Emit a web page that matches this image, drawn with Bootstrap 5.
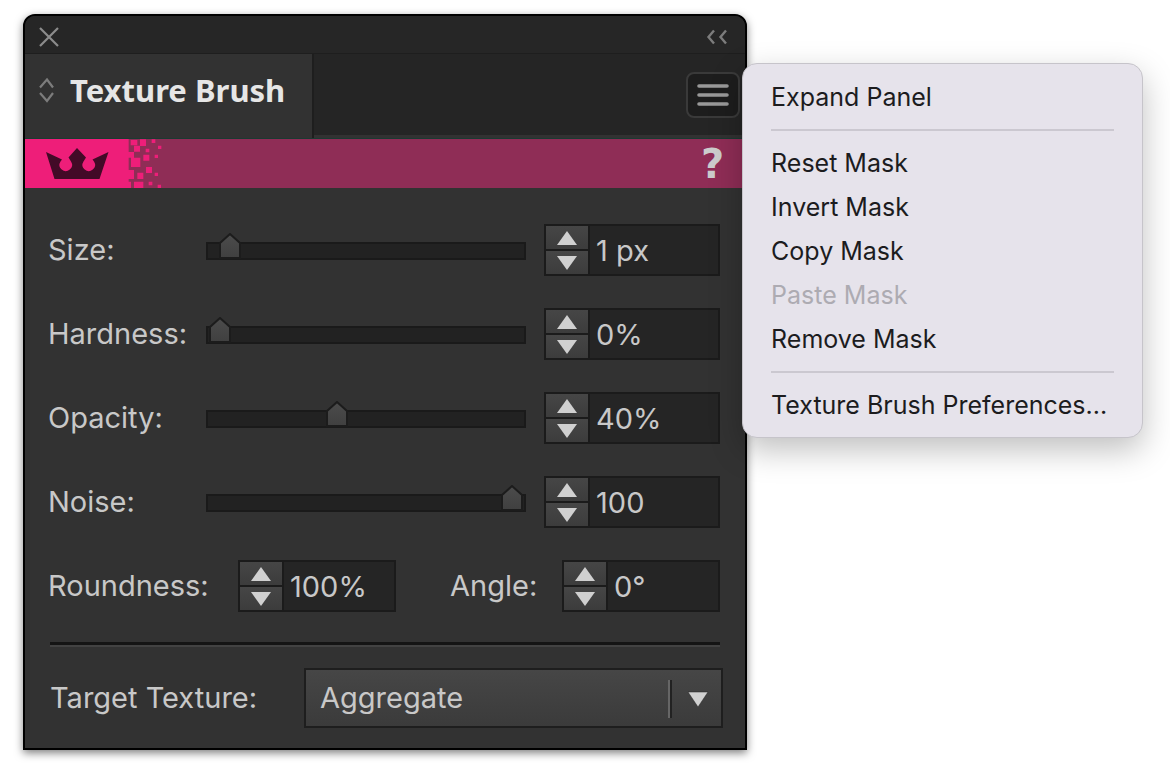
<!DOCTYPE html>
<html lang="en">
<head>
<meta charset="utf-8">
<meta name="viewport" content="width=device-width, initial-scale=1">
<title>Texture Brush</title>
<link href="https://cdn.jsdelivr.net/npm/bootstrap@5.3.0/dist/css/bootstrap.min.css" rel="stylesheet">
<style>
  body { background: #fff; font-family: Inter, "Liberation Sans", sans-serif; }
  .stage { padding: 14px 27px 20px 23px; }

  /* Panel frame */
  .brush-panel {
    flex: 0 0 64.65%; min-width: 0;
    background: #323232; color: #c8c8c8;
    border: 2px solid #000; border-radius: 12px 12px 0 0;
    box-shadow: 0 3px 9px rgba(0,0,0,.5);
    overflow: hidden; font-size: 29px; line-height: 32px;
  }
  .title-strip { height: 38px; padding: 4px 17px 0 13px; background: #262626; border-bottom: 1px solid #1e1e1e; }
  .bare { background: none; border: 0; padding: 0; color: inherit; line-height: 0; }
  .tab-strip { height: 85px; background: linear-gradient(#252525 0 81px, #323232 81px); border-bottom: 1px solid #1b3a32; }
  .tab-active { width: 289px; padding: 0 0 12px 13px; background: #323232; border-right: 2px solid #1e1e1e; color: #e6e6e6; }
  .tab-active h1 { font: 700 31px/40px "Noto Sans", sans-serif; }
  .burger { width: 54px; height: 46px; margin: 18px 5px 0 0; background: #1d1d1d; border: 2px solid #3a3a3a; border-radius: 8px; }

  /* Brand banner */
  .brand-strip { height: 49px; background: #8f2d56; }
  .brand-mark { width: 102px; background: #ee1e79; }
  .help { margin-right: 21px; color: #ccc; font: 700 40px/48px "DejaVu Sans", sans-serif; }

  /* Controls */
  .controls { padding: 36px 25px 20px 23px; }
  .controls label { color: #c8c8c8; flex: none; }
  .control-row { margin-bottom: 32px; }
  .lab-slider { width: 158px; }
  .lab-round { width: 190px; }
  .lab-angle { width: 112px; }
  .lab-target { width: 256px; padding-left: 2px; }
  .gap-slider { gap: 18px; }

  .brush-range {
    flex: 1 1 0; min-width: 0; width: auto; height: 28px; padding: 0 3px;
    background:
      linear-gradient(#222, #222) center 11px / calc(100% - 4px) 14px no-repeat,
      linear-gradient(#1a1a1a, #1a1a1a) 0 9px / 100% 18px no-repeat;
    margin-top: -7px;
  }
  .brush-range::-webkit-slider-runnable-track { height: 28px; background: transparent; }
  .brush-range::-webkit-slider-thumb {
    width: 22px; height: 28px; margin: 0; border: 0; border-radius: 0; box-shadow: none;
    background: url("data:image/svg+xml,%3Csvg xmlns='http://www.w3.org/2000/svg' viewBox='0 0 22 28'%3E%3Cdefs%3E%3ClinearGradient id='g' x2='0' y2='1'%3E%3Cstop stop-color='%234c4c4c'/%3E%3Cstop offset='1' stop-color='%23404040'/%3E%3C/linearGradient%3E%3C/defs%3E%3Cpath d='M11 1 21 10V25H1V10Z' fill='url(%23g)' stroke='%231c1c1c' stroke-width='2'/%3E%3C/svg%3E") center / 22px 28px no-repeat;
  }

  .stepper { height: 52px; border: 2px solid #1b1b1b; background: #252525; flex: 0 0 176px; }
  .stepper-sm { flex-basis: 158px; }
  .stepper .steps { flex: 0 0 44px; border-right: 2px solid #1b1b1b; }
  .steps button { flex: 1 1 0; background: linear-gradient(#464646, #3c3c3c); border: 0; padding: 0; line-height: 0; }
  .steps button + button { border-top: 2px solid #1b1b1b; }
  .stepper input {
    background: transparent; border: 0; border-radius: 0; color: #c8c8c8;
    font-size: 29px; line-height: 32px; padding: 0 0 0 6px; min-width: 0; height: 48px;
  }
  .rule { height: 5px; margin: 30px 0 21px 2px; opacity: 1; border: 0; background: linear-gradient(#141414 0 3px, #424242 3px); }

  .texture-select {
    flex: 1 1 0; height: 60px; margin-right: -3px; padding: 0 60px 0 14px;
    font-size: 29px; line-height: 32px; color: #c8c8c8;
    border: 2px solid #1e1e1e; border-radius: 0;
    background:
      url("data:image/svg+xml,%3Csvg xmlns='http://www.w3.org/2000/svg' viewBox='0 0 54 56'%3E%3Cpath d='M2 10V48' stroke='%23666' stroke-width='2'/%3E%3Cpath d='M4 10V48' stroke='%23222' stroke-width='2'/%3E%3Cpath d='M21 22H41L31 37Z' fill='%23d0d0d0' stroke='%23222' stroke-opacity='.5'/%3E%3C/svg%3E") right center / 54px 56px no-repeat,
      linear-gradient(#464646, #3b3b3b);
  }

  /* Flyout menu, tucked over the panel's right edge */
  .flyout {
    flex: 1 1 0; min-width: 0; margin: 49px 0 0 -5px !important; padding: 11px 28px 10px;
    background: #e6e3eb; border: 1px solid #c6c4ca; border-radius: 15px;
    box-shadow: 0 12px 32px rgba(0,0,0,.25); z-index: 2;
    font-size: 25px;
  }
  .flyout .dropdown-item { padding: 0; line-height: 44px; color: #1c1c1e; overflow: visible; }
  .flyout .dropdown-item:disabled { color: #adabb2; }
  .flyout .dropdown-divider { margin: 10px 0; border-top: 2px solid #cbc8d0; }
</style>
</head>
<body>
<main class="stage d-flex align-items-start">
  <section class="brush-panel" aria-label="Texture Brush panel">
    <div class="title-strip d-flex align-items-center justify-content-between">
      <button class="bare" type="button" aria-label="Close">
        <svg width="22" height="22" viewBox="0 0 22 22" stroke="#8c8c8c" stroke-width="2.200"><path d="M2 2 20 20M20 2 2 20"/></svg>
      </button>
      <button class="bare" type="button" aria-label="Collapse">
        <svg width="24" height="18" viewBox="0 0 24 18" fill="none" stroke="#7c7c7c" stroke-width="2.400"><path d="M10 2.500 4.500 9 10 15.500M22 2.500 16.500 9 22 15.500"/></svg>
      </button>
    </div>
    <div class="tab-strip d-flex justify-content-between align-items-start">
      <div class="tab-active h-100 d-flex align-items-center gap-3">
        <svg width="16" height="26" viewBox="0 0 16 26" fill="none" stroke="#7c7c7c" stroke-width="2.200"><path d="M2 10.500 9 2.500 15 10.500M2 16 9 24 15 16"/></svg>
        <h1 class="m-0 text-nowrap">Texture Brush</h1>
      </div>
      <button class="bare burger" type="button" aria-label="Panel menu">
        <svg width="34" height="26" viewBox="0 0 34 26" stroke="#999" stroke-width="3.600" stroke-linecap="round"><path d="M3 4H31M3 13H31M3 22H31"/></svg>
      </button>
    </div>
    <div class="brand-strip d-flex">
      <div class="brand-mark">
        <svg width="102" height="49" viewBox="0 0 102 49" fill="#430a27"><path d="M21 13 37 20.500 35.500 22.500A6.200 6.200 0 1 0 46 22.500L43.500 18.500 52 9 61 18.500 58.500 22.500A6.200 6.200 0 1 0 69 22.500L67.500 20.500 83.500 13 74.500 40H29.500Z"/></svg>
      </div>
      <svg width="40" height="49" viewBox="351 417 120 147" fill="#ee1e79"><path d="M351 417h5v147h-5zM362 420h20v16h-20zM390 418h18v20h-18zM372 437h18v18h-18zM354 456h18v17h-18zM425 418h11v11h-11zM444 437h10v10h-10zM407 446h11v11h-11zM400 464h18v18h-18zM434 464h10v10h-10zM363 473h28v28h-28zM408 501h18v18h-18zM434 518h10v10h-10zM354 510h18v27h-18zM382 518h18v19h-18zM372 545h28v19h-28zM416 545h11v11h-11zM443 554h10v10h-10zM354 545h9v19h-9z"/></svg>
      <button class="bare help ms-auto" type="button" aria-label="Help">?</button>
    </div>

    <form class="controls">
      <div class="control-row d-flex align-items-center">
        <label class="lab-slider" for="size">Size:</label>
        <div class="d-flex flex-fill align-items-center gap-slider">
          <input class="form-range brush-range" type="range" min="0" max="30" value="1" aria-label="Size slider">
          <div class="stepper d-flex">
            <div class="steps d-flex flex-column">
              <button type="button" aria-label="Increase size"><svg width="22" height="16" viewBox="0 0 22 16"><path d="M11 1 21 15H1Z" fill="#d0d0d0"/></svg></button>
              <button type="button" aria-label="Decrease size"><svg width="22" height="16" viewBox="0 0 22 16"><path d="M1 1H21L11 15Z" fill="#d0d0d0"/></svg></button>
            </div>
            <input class="form-control" id="size" type="text" value="1 px">
          </div>
        </div>
      </div>
      <div class="control-row d-flex align-items-center">
        <label class="lab-slider" for="hardness">Hardness:</label>
        <div class="d-flex flex-fill align-items-center gap-slider">
          <input class="form-range brush-range" type="range" min="0" max="100" value="0" aria-label="Hardness slider">
          <div class="stepper d-flex">
            <div class="steps d-flex flex-column">
              <button type="button" aria-label="Increase hardness"><svg width="22" height="16" viewBox="0 0 22 16"><path d="M11 1 21 15H1Z" fill="#d0d0d0"/></svg></button>
              <button type="button" aria-label="Decrease hardness"><svg width="22" height="16" viewBox="0 0 22 16"><path d="M1 1H21L11 15Z" fill="#d0d0d0"/></svg></button>
            </div>
            <input class="form-control" id="hardness" type="text" value="0%">
          </div>
        </div>
      </div>
      <div class="control-row d-flex align-items-center">
        <label class="lab-slider" for="opacity">Opacity:</label>
        <div class="d-flex flex-fill align-items-center gap-slider">
          <input class="form-range brush-range" type="range" min="0" max="100" value="40" aria-label="Opacity slider">
          <div class="stepper d-flex">
            <div class="steps d-flex flex-column">
              <button type="button" aria-label="Increase opacity"><svg width="22" height="16" viewBox="0 0 22 16"><path d="M11 1 21 15H1Z" fill="#d0d0d0"/></svg></button>
              <button type="button" aria-label="Decrease opacity"><svg width="22" height="16" viewBox="0 0 22 16"><path d="M1 1H21L11 15Z" fill="#d0d0d0"/></svg></button>
            </div>
            <input class="form-control" id="opacity" type="text" value="40%">
          </div>
        </div>
      </div>
      <div class="control-row d-flex align-items-center">
        <label class="lab-slider" for="noise">Noise:</label>
        <div class="d-flex flex-fill align-items-center gap-slider">
          <input class="form-range brush-range" type="range" min="0" max="100" value="100" aria-label="Noise slider">
          <div class="stepper d-flex">
            <div class="steps d-flex flex-column">
              <button type="button" aria-label="Increase noise"><svg width="22" height="16" viewBox="0 0 22 16"><path d="M11 1 21 15H1Z" fill="#d0d0d0"/></svg></button>
              <button type="button" aria-label="Decrease noise"><svg width="22" height="16" viewBox="0 0 22 16"><path d="M1 1H21L11 15Z" fill="#d0d0d0"/></svg></button>
            </div>
            <input class="form-control" id="noise" type="text" value="100">
          </div>
        </div>
      </div>
      <div class="d-flex align-items-center justify-content-between">
        <div class="d-flex align-items-center">
          <label class="lab-round" for="roundness">Roundness:</label>
          <div class="stepper stepper-sm d-flex">
            <div class="steps d-flex flex-column">
              <button type="button" aria-label="Increase roundness"><svg width="22" height="16" viewBox="0 0 22 16"><path d="M11 1 21 15H1Z" fill="#d0d0d0"/></svg></button>
              <button type="button" aria-label="Decrease roundness"><svg width="22" height="16" viewBox="0 0 22 16"><path d="M1 1H21L11 15Z" fill="#d0d0d0"/></svg></button>
            </div>
            <input class="form-control" id="roundness" type="text" value="100%">
          </div>
        </div>
        <div class="d-flex align-items-center">
          <label class="lab-angle" for="angle">Angle:</label>
          <div class="stepper stepper-sm d-flex">
            <div class="steps d-flex flex-column">
              <button type="button" aria-label="Increase angle"><svg width="22" height="16" viewBox="0 0 22 16"><path d="M11 1 21 15H1Z" fill="#d0d0d0"/></svg></button>
              <button type="button" aria-label="Decrease angle"><svg width="22" height="16" viewBox="0 0 22 16"><path d="M1 1H21L11 15Z" fill="#d0d0d0"/></svg></button>
            </div>
            <input class="form-control" id="angle" type="text" value="0°">
          </div>
        </div>
      </div>
      <hr class="rule">
      <div class="d-flex align-items-center">
        <label class="lab-target" for="texture">Target Texture:</label>
        <select class="form-select texture-select" id="texture"><option selected>Aggregate</option></select>
      </div>
    </form>
  </section>

  <ul class="dropdown-menu flyout show position-relative">
    <li><button class="dropdown-item" type="button">Expand Panel</button></li>
    <li><hr class="dropdown-divider"></li>
    <li><button class="dropdown-item" type="button">Reset Mask</button></li>
    <li><button class="dropdown-item" type="button">Invert Mask</button></li>
    <li><button class="dropdown-item" type="button">Copy Mask</button></li>
    <li><button class="dropdown-item" type="button" disabled>Paste Mask</button></li>
    <li><button class="dropdown-item" type="button">Remove Mask</button></li>
    <li><hr class="dropdown-divider"></li>
    <li><button class="dropdown-item" type="button">Texture Brush Preferences...</button></li>
  </ul>
</main>
<script src="https://cdn.jsdelivr.net/npm/bootstrap@5.3.0/dist/js/bootstrap.bundle.min.js"></script>
</body>
</html>
